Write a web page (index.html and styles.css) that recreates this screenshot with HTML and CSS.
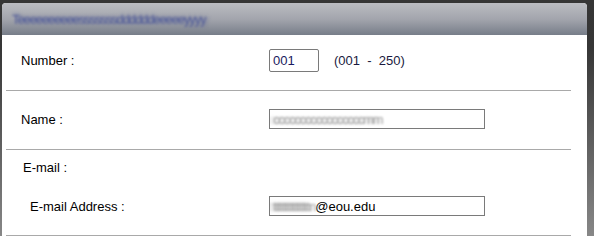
FILE: index.html
```html
<html>
	<head>
		<title>Registration</title>
		<link rel="stylesheet" href="styles.css">
	</head>
	<body>
		<div class="panel">
			<div class="header">
				<span class="blurred title">Teeeeeeeeeesssssssddddddeeeeeyyyy</span>
			</div>

			<div class="row row-number">
				<div class="label">Number :</div>
				<div class="field">
					<div class="box small">001</div>
					<span class="range">(001&nbsp; -&nbsp; 250)</span>
				</div>
			</div>

			<div class="row row-name">
				<div class="label">Name :</div>
				<div class="field">
					<div class="box wide"><span class="blurred faint">cccccccccccccccccmm</span></div>
				</div>
			</div>

			<div class="row row-email">
				<div class="group-label">E-mail :</div>
				<div class="sub">
					<div class="label sub-label">E-mail Address :</div>
					<div class="field">
						<div class="box wide"><span class="blurred faint">tttttttttttttttn</span>@eou.edu</div>
					</div>
				</div>
			</div>
		</div>
	</body>
</html>
```

FILE: styles.css
```css
html, body {
	margin: 0;
	height: 100%;
}

body {
	font-family: Arial, "Liberation Sans", sans-serif;
	font-size: 13px;
	color: #000;
	background: linear-gradient(#353535, #363636 20%, #878787);
	padding: 3px 7px 0px 2px;
	box-sizing: border-box;
	overflow: hidden;
}

.panel {
	background-color: #fff;
	border-radius: 4px 4px 0px 0px;
	height: 240px;
}

.header {
	height: 32px;
	border-radius: 4px 4px 0px 0px;
	background: linear-gradient(#bbbcc1, #a3a5ad 50%, #777d89);
	padding-left: 10px;
	display: flex;
	align-items: center;
}

.blurred {
	filter: blur(1px);
}

.title {
	color: #56609a;
	font-size: 13px;
	letter-spacing: -1.1px;
	text-shadow: 0px -2px 2px rgba(90, 100, 150, 0.4), 3px 0px 2px rgba(90, 100, 150, 0.3);
}

.row {
	margin: 0px 16px 0px 4px;
	border-bottom: solid 1px #a9a9a9;
}

.row-number,
.row-name,
.sub {
	display: flex;
	align-items: center;
}

.row-number {
	padding: 14px 0px 18px 0px;
}

.row-name {
	padding: 18px 0px 20px 0px;
}

.row-email {
	padding: 10px 0px 19px 0px;
}

.label {
	width: 248px;
	padding-left: 15px;
	line-height: 15px;
}

.group-label {
	padding-left: 17px;
	line-height: 15px;
	margin-bottom: 21px;
}

.sub-label {
	width: 239px;
	padding-left: 24px;
}

.field {
	display: flex;
	align-items: center;
}

.box {
	border: solid 1px #7a7a7a;
	box-sizing: border-box;
	padding: 0px 3px;
	display: flex;
	align-items: center;
	white-space: nowrap;
	overflow: hidden;
}

.small {
	width: 50px;
	height: 23px;
	border-radius: 2px;
	color: #1a1a60;
}

.wide {
	width: 216px;
	height: 20px;
}

.faint {
	color: #9a9a9a;
	letter-spacing: -1.2px;
	text-shadow: -4px 0px 2px rgba(170, 170, 170, 0.5);
}

.range {
	margin-left: 15px;
	color: #1a1a40;
}
```
